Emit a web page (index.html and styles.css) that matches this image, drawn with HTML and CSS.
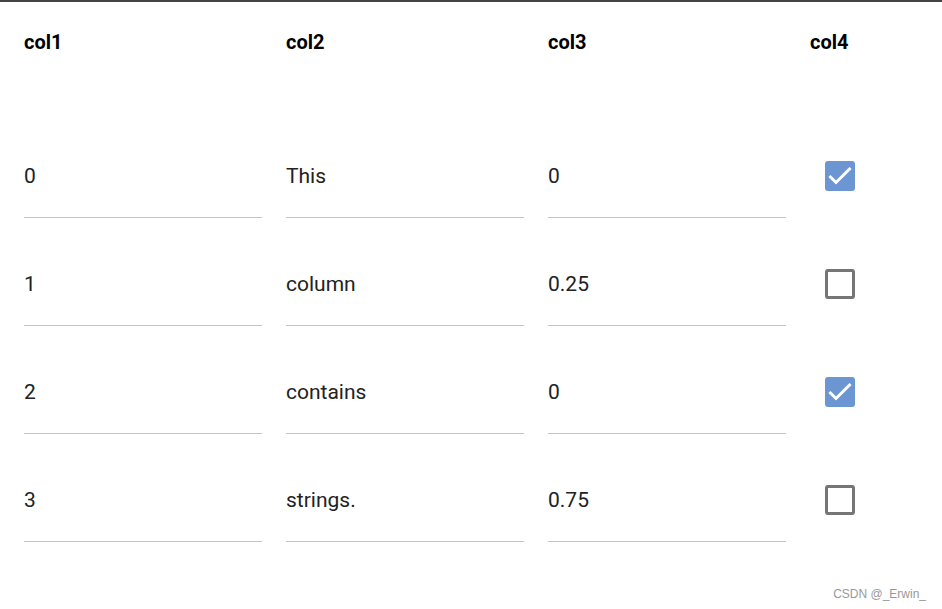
FILE: index.html
```html
<!DOCTYPE html>
<html lang="en">
<head>
<meta charset="utf-8">
<title>Table</title>
<link rel="stylesheet" href="styles.css">
</head>
<body>
<div class="page">
  <div class="grid">
    <div class="head">col1</div>
    <div class="head">col2</div>
    <div class="head">col3</div>
    <div class="head">col4</div>

    <div class="cell"><div class="field">0</div></div>
    <div class="cell"><div class="field">This</div></div>
    <div class="cell"><div class="field">0</div></div>
    <div class="cell cb-cell"><span class="cb checked"><svg viewBox="0 0 30 30" width="30" height="30"><polyline points="5.5,16 11,21.5 24.5,8" fill="none" stroke="#fff" stroke-width="3" stroke-linecap="square"/></svg></span></div>

    <div class="cell"><div class="field">1</div></div>
    <div class="cell"><div class="field">column</div></div>
    <div class="cell"><div class="field">0.25</div></div>
    <div class="cell cb-cell"><span class="cb"></span></div>

    <div class="cell"><div class="field">2</div></div>
    <div class="cell"><div class="field">contains</div></div>
    <div class="cell"><div class="field">0</div></div>
    <div class="cell cb-cell"><span class="cb checked"><svg viewBox="0 0 30 30" width="30" height="30"><polyline points="5.5,16 11,21.5 24.5,8" fill="none" stroke="#fff" stroke-width="3" stroke-linecap="square"/></svg></span></div>

    <div class="cell"><div class="field">3</div></div>
    <div class="cell"><div class="field">strings.</div></div>
    <div class="cell"><div class="field">0.75</div></div>
    <div class="cell cb-cell"><span class="cb"></span></div>
  </div>
  <div class="watermark">CSDN @_Erwin_</div>
</div>
</body>
</html>
```
FILE: styles.css
```css
html, body {
  margin: 0;
  padding: 0;
  background: #fff;
}
body {
  font-family: Roboto, "Liberation Sans", sans-serif;
  border-top: 2px solid #444;
  height: 607px;
  overflow: hidden;
}
.page {
  position: relative;
  height: 607px;
}
.grid {
  display: grid;
  grid-template-columns: 238px 238px 238px 60px;
  column-gap: 24px;
  padding-left: 24px;
}
.head {
  font-weight: 700;
  font-size: 20px;
  line-height: 24px;
  color: #000;
  padding-top: 28px;
  padding-bottom: 56px;
}
.cell {
  height: 108px;
}
.field {
  padding-top: 54px;
  height: 24px;
  padding-bottom: 29px;
  border-bottom: 1px solid #c4c4c4;
  font-size: 21px;
  line-height: 24px;
  color: #222;
}
.cb-cell {
  display: flex;
  justify-content: center;
  padding-top: 51px;
  box-sizing: border-box;
}
.cb {
  width: 30px;
  height: 30px;
  box-sizing: border-box;
  border: 3px solid #767676;
  border-radius: 3px;
  display: block;
}
.cb.checked {
  border: none;
  background: #6b96d1;
}
.cb svg {
  display: block;
}
.watermark {
  position: absolute;
  right: 16px;
  bottom: 8px;
  font-family: "Liberation Sans", Arial, sans-serif;
  font-size: 12px;
  color: #999;
}
```
